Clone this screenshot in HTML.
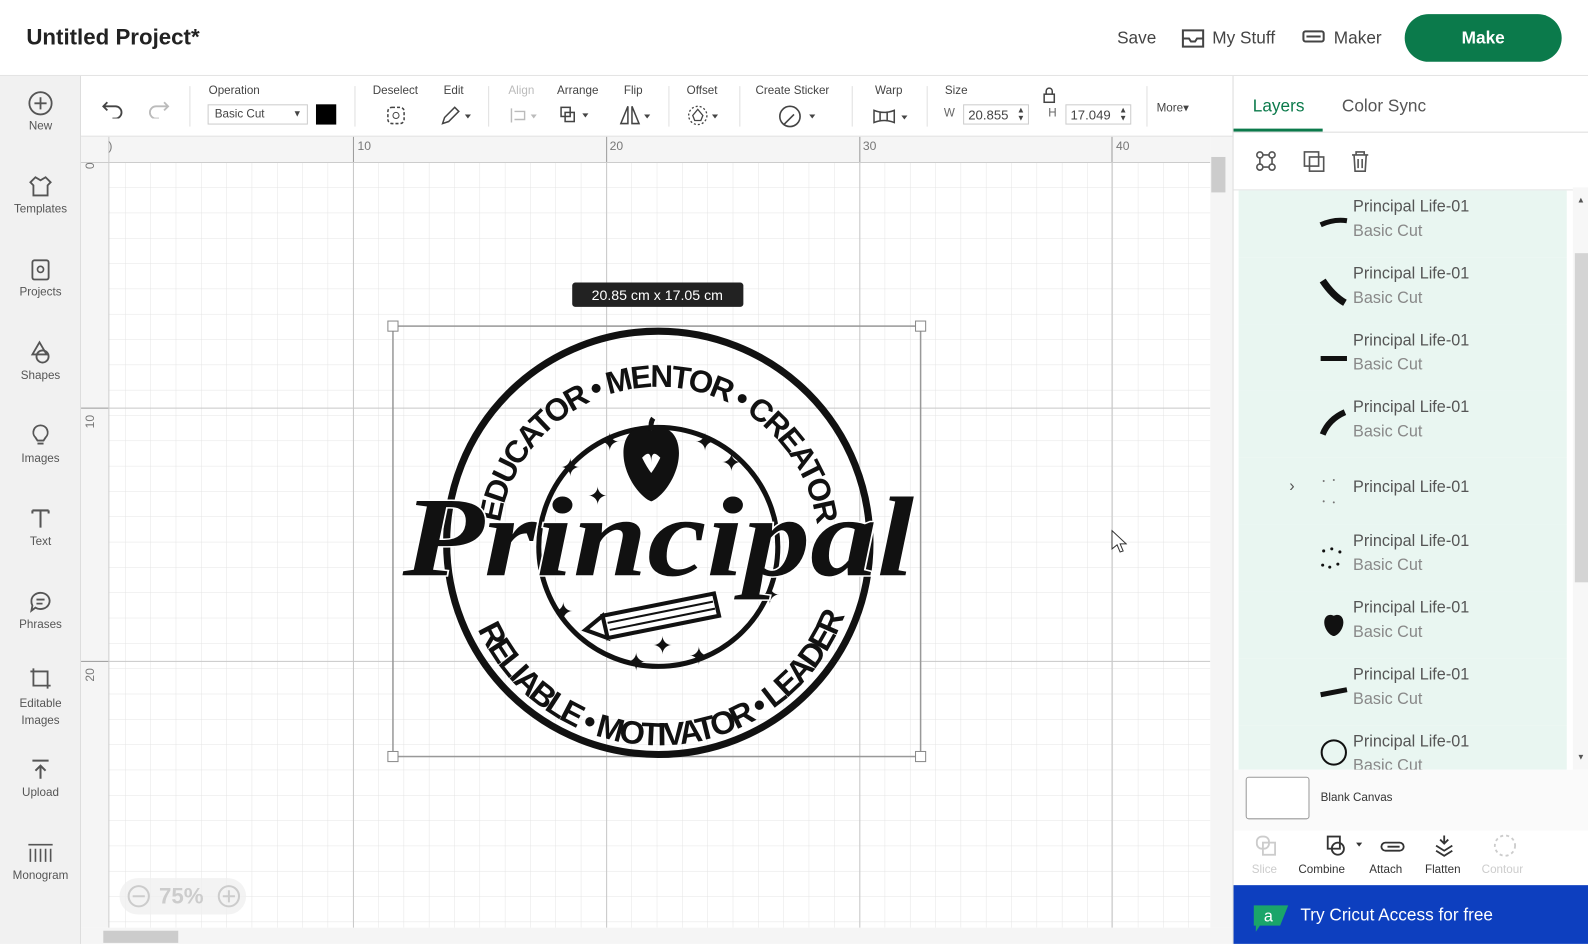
<!DOCTYPE html>
<html><head><meta charset="utf-8"><style>
*{box-sizing:border-box;margin:0;padding:0}
html,body{width:1588px;height:944px;overflow:hidden}
body{font-family:"Liberation Sans",sans-serif;background:#fff;color:#333}
#w{position:absolute;left:0;top:0;width:1568px;height:932px;transform:scale(1.01276);transform-origin:0 0;overflow:hidden}
.abs{position:absolute}
.hdr{left:0;top:0;width:1568px;height:75px;background:#fff;border-bottom:1px solid #e2e2e2}
.side{left:0;top:75px;width:80px;height:869px;background:#f1f1f1;border-right:1px solid #ddd}
.si{position:absolute;left:0;width:80px;text-align:center;font-size:11.5px;color:#555}
.si svg{display:block;margin:0 auto 4px}
.tb{left:80px;top:75px;width:1137px;height:60px;background:#fff;border-bottom:1px solid #ddd}
.lbl{position:absolute;font-size:11.5px;color:#444;top:9px}
.sep{position:absolute;top:10px;width:1px;height:40px;background:#e0e0e0}
.panel{left:1217px;top:75px;width:371px;height:869px;background:#fff;border-left:1px solid #ddd}
.row{position:absolute;left:5px;width:324px;height:66px;background:#e9f6f1}
.row .t1{position:absolute;left:113px;top:8px;font-size:16px;color:#555}
.row .t2{position:absolute;left:113px;top:32px;font-size:16px;color:#888}
</style></head><body><div id="w">
<div class="abs hdr">
 <div class="abs" style="left:26px;top:24px;font-size:22px;color:#222;font-weight:bold">Untitled Project*</div>
 <div class="abs" style="left:1103px;top:28px;font-size:17px;color:#444">Save</div>
 <svg class="abs" style="left:1166px;top:26px" width="24" height="22" viewBox="0 0 24 22"><path d="M2 4h20v16H2z M2 12h6l2 3h4l2-3h6" fill="none" stroke="#444" stroke-width="2"/></svg>
 <div class="abs" style="left:1197px;top:28px;font-size:17px;color:#444">My Stuff</div>
 <svg class="abs" style="left:1285px;top:28px" width="24" height="18" viewBox="0 0 24 18"><rect x="2" y="3" width="20" height="10" rx="2" fill="none" stroke="#444" stroke-width="2"/><path d="M5 8h14" stroke="#444" stroke-width="2"/></svg>
 <div class="abs" style="left:1317px;top:28px;font-size:17px;color:#444">Maker</div>
 <div class="abs" style="left:1387px;top:14px;width:155px;height:47px;border-radius:24px;background:#0b7a4b;color:#fff;font-size:17px;font-weight:bold;text-align:center;line-height:47px">Make</div>
</div>
<div class="abs side">
 <div class="si" style="top:14px"><svg width="26" height="26"><circle cx="13" cy="13" r="11" fill="none" stroke="#555" stroke-width="1.8"/><path d="M13 7v12M7 13h12" stroke="#555" stroke-width="1.8"/></svg>New</div>
 <div class="si" style="top:96px"><svg width="26" height="26"><path d="M8 4l5 3 5-3 5 5-3 3v10H6V12L3 9z" fill="none" stroke="#555" stroke-width="1.8"/></svg>Templates</div>
 <div class="si" style="top:178px"><svg width="26" height="26"><rect x="5" y="4" width="16" height="19" rx="2" fill="none" stroke="#555" stroke-width="1.8"/><circle cx="13" cy="13" r="3" fill="none" stroke="#555" stroke-width="1.6"/></svg>Projects</div>
 <div class="si" style="top:260px"><svg width="26" height="26"><path d="M12 3l7 12H5z" fill="none" stroke="#555" stroke-width="1.8"/><circle cx="15" cy="17" r="6" fill="none" stroke="#555" stroke-width="1.8"/></svg>Shapes</div>
 <div class="si" style="top:342px"><svg width="26" height="26"><path d="M13 3a7 7 0 0 1 5 12l-2 3h-6l-2-3a7 7 0 0 1 5-12zM10 21h6" fill="none" stroke="#555" stroke-width="1.8"/></svg>Images</div>
 <div class="si" style="top:424px"><svg width="26" height="26"><path d="M5 5h16M13 5v17M5 5v3M21 5v3" fill="none" stroke="#555" stroke-width="2"/></svg>Text</div>
 <div class="si" style="top:506px"><svg width="26" height="26"><path d="M4 12a9 8 0 1 1 4 7l-4 3 1-5a9 9 0 0 1-1-5z M9 11h8M9 15h6" fill="none" stroke="#555" stroke-width="1.8"/></svg>Phrases</div>
 <div class="si" style="top:582px;line-height:17px"><svg width="26" height="26"><path d="M6 6h14v14H6zM3 6h6M6 3v6M17 20h6M20 17v6" fill="none" stroke="#555" stroke-width="1.8"/></svg>Editable<br>Images</div>
 <div class="si" style="top:672px"><svg width="26" height="26"><path d="M5 4h16M13 22V9M8 14l5-5 5 5" fill="none" stroke="#555" stroke-width="2"/></svg>Upload</div>
 <div class="si" style="top:754px"><svg width="30" height="26"><path d="M3 5h24M5 9v13M10 9v13M15 9v13M20 9v13M25 9v13" fill="none" stroke="#555" stroke-width="1.6"/></svg>Monogram</div>
</div>
<div class="abs tb">
 <svg class="abs" style="left:20px;top:22px" width="24" height="20"><path d="M6 4L2 8l4 4M2 8h12a6 6 0 0 1 0 12h-3" fill="none" stroke="#444" stroke-width="1.8"/></svg>
 <svg class="abs" style="left:64px;top:22px" width="24" height="20"><path d="M18 4l4 4-4 4M22 8H10a6 6 0 0 0 0 12h3" fill="none" stroke="#bbb" stroke-width="1.8"/></svg>
 <div class="sep" style="left:107px"></div>
 <div class="lbl" style="left:126px">Operation</div>
 <div class="abs" style="left:125px;top:28px;width:99px;height:20px;border:1px solid #ccc;font-size:11.5px;color:#444;padding:3px 6px">Basic Cut<span style="position:absolute;right:5px;font-size:9px">▼</span></div>
 <div class="abs" style="left:232px;top:28px;width:20px;height:20px;background:#000"></div>
 <div class="sep" style="left:270px"></div>
 <div class="lbl" style="left:288px">Deselect</div>
 <svg class="abs" style="left:300px;top:28px" width="22" height="22"><rect x="3" y="3" width="16" height="16" rx="4" fill="none" stroke="#444" stroke-width="1.5" stroke-dasharray="3 2"/><circle cx="11" cy="11" r="3" fill="none" stroke="#444"/></svg>
 <div class="lbl" style="left:358px">Edit</div>
 <svg class="abs" style="left:354px;top:28px" width="34" height="22"><path d="M3 19l2-6 10-10 4 4-10 10z" fill="none" stroke="#444" stroke-width="1.5"/><path d="M25 10l3 4 3-4z" fill="#444"/></svg>
 <div class="sep" style="left:402px"></div>
 <div class="lbl" style="left:422px;color:#bbb">Align</div>
 <svg class="abs" style="left:423px;top:30px" width="30" height="18"><path d="M2 2v14M5 5h10v8H5" fill="none" stroke="#bbb" stroke-width="1.4"/><path d="M21 8l3 4 3-4z" fill="#bbb"/></svg>
 <div class="lbl" style="left:470px">Arrange</div>
 <svg class="abs" style="left:472px;top:29px" width="32" height="20"><rect x="2" y="2" width="9" height="9" fill="none" stroke="#444" stroke-width="1.5"/><rect x="6" y="7" width="9" height="9" fill="none" stroke="#444" stroke-width="1.5"/><path d="M23 8l3 4 3-4z" fill="#444"/></svg>
 <div class="lbl" style="left:536px">Flip</div>
 <svg class="abs" style="left:531px;top:28px" width="34" height="22"><path d="M9 2L2 19h7zM13 2l7 17h-7z" fill="none" stroke="#444" stroke-width="1.5"/><path d="M25 10l3 4 3-4z" fill="#444"/></svg>
 <div class="sep" style="left:580px"></div>
 <div class="lbl" style="left:598px">Offset</div>
 <svg class="abs" style="left:598px;top:28px" width="34" height="22"><circle cx="11" cy="11" r="9" fill="none" stroke="#444" stroke-width="1.3" stroke-dasharray="2 2"/><path d="M11 5l5 6-2 5H8l-2-5z" fill="none" stroke="#444" stroke-width="1.3"/><path d="M25 10l3 4 3-4z" fill="#444"/></svg>
 <div class="sep" style="left:650px"></div>
 <div class="lbl" style="left:666px">Create Sticker</div>
 <svg class="abs" style="left:688px;top:28px" width="40" height="24"><circle cx="12" cy="12" r="10" fill="none" stroke="#444" stroke-width="1.6"/><path d="M6 20l10-10" stroke="#444" stroke-width="1.6"/><path d="M31 10l3 4 3-4z" fill="#444"/></svg>
 <div class="sep" style="left:761px"></div>
 <div class="lbl" style="left:784px">Warp</div>
 <svg class="abs" style="left:780px;top:30px" width="40" height="20"><path d="M3 4q10 4 20 0v12q-10-4-20 0z M9 5v10M16 5v10" fill="none" stroke="#444" stroke-width="1.5"/><path d="M30 9l3 4 3-4z" fill="#444"/></svg>
 <div class="sep" style="left:835px"></div>
 <div class="lbl" style="left:853px">Size</div>
 <svg class="abs" style="left:949px;top:11px" width="14" height="16"><rect x="2" y="7" width="10" height="8" fill="none" stroke="#444" stroke-width="1.5"/><path d="M4 7V4a3 3 0 0 1 6 0v3" fill="none" stroke="#444" stroke-width="1.5"/></svg>
 <div class="abs" style="left:852px;top:31px;font-size:11.5px;color:#666">W</div>
 <div class="abs" style="left:871px;top:28px;width:65px;height:20px;border:1px solid #ccc;font-size:13px;color:#444;padding:2px 4px">20.855<span style="position:absolute;right:3px;top:1px;font-size:8px;line-height:8px">▲<br>▼</span></div>
 <div class="abs" style="left:955px;top:31px;font-size:11.5px;color:#666">H</div>
 <div class="abs" style="left:972px;top:28px;width:65px;height:20px;border:1px solid #ccc;font-size:13px;color:#444;padding:2px 4px">17.049<span style="position:absolute;right:3px;top:1px;font-size:8px;line-height:8px">▲<br>▼</span></div>
 <div class="sep" style="left:1052px"></div>
 <div class="abs" style="left:1062px;top:24px;font-size:11.5px;color:#444">More▾</div>
</div>
<svg class="abs" style="left:80px;top:135px" width="1137" height="809">
 <defs>
  <pattern id="mi" x="-6" y="0" width="25" height="25" patternUnits="userSpaceOnUse"><path d="M25 0V25M0 0H25" stroke="#e4e4e4" stroke-width="1" fill="none"/></pattern>
 </defs>
 <rect width="1137" height="809" fill="#fff"/>
 <rect x="27" y="25" width="1088" height="756" fill="url(#mi)"/>
 <g stroke="#c8c8c8" stroke-width="1">
  <path d="M269 25V781M519 25V781M769 25V781M1018 25V781M27 268H1115M27 518H1115"/>
 </g>
 <rect x="0" y="0" width="1115" height="25" fill="#f5f5f5"/>
 <rect x="0" y="0" width="27" height="781" fill="#f5f5f5"/>
 <path d="M0 25.5H1115M27.5 0V781" stroke="#ccc"/>
 <g stroke="#999"><path d="M269 0V25M519 0V25M769 0V25M1018 0V25M0 268H27M0 518H27"/></g>
 <g font-size="12" fill="#777"><text x="27" y="13">)</text><text x="273" y="13">10</text><text x="522" y="13">20</text><text x="772" y="13">30</text><text x="1022" y="13">40</text>
 <text transform="translate(13,288) rotate(-90)">10</text><text transform="translate(13,538) rotate(-90)">20</text><text transform="translate(13,32) rotate(-90)">0</text></g>
 <rect x="1115" y="0" width="22" height="781" fill="#f5f5f5"/>
 <rect x="1116" y="20" width="14" height="35" fill="#ccc"/>
 <rect x="0" y="781" width="1137" height="28" fill="#f5f5f5"/>
 <rect x="22" y="784" width="74" height="12" fill="#ccc"/>
 <rect x="38" y="732" width="125" height="36" rx="18" fill="#f0f0f0" opacity=".8"/>
 <text x="77" y="757" font-size="22" fill="#ccc" font-weight="bold">75%</text>
 <circle cx="57" cy="750" r="10" fill="none" stroke="#ccc" stroke-width="2"/><path d="M51 750h12" stroke="#ccc" stroke-width="2"/>
 <circle cx="146" cy="750" r="10" fill="none" stroke="#ccc" stroke-width="2"/><path d="M140 750h12M146 744v12" stroke="#ccc" stroke-width="2"/>
</svg>
<svg class="abs" style="left:380px;top:275px" width="540" height="490" viewBox="380 275 540 490">
 <rect x="565" y="279" width="169" height="24" rx="3" fill="#222"/>
 <text x="649" y="296" text-anchor="middle" font-size="14" fill="#fff">20.85  cm x 17.05  cm</text>
 <rect x="388" y="322" width="521" height="425" fill="none" stroke="#999" stroke-width="1.5"/>
 <g fill="#fff" stroke="#888"><rect x="383" y="317" width="10" height="10"/><rect x="904" y="317" width="10" height="10"/><rect x="383" y="742" width="10" height="10"/><rect x="904" y="742" width="10" height="10"/></g>
 <circle cx="650" cy="536" r="209" fill="none" stroke="#111" stroke-width="7"/>
 <circle cx="650" cy="540" r="118" fill="none" stroke="#111" stroke-width="5"/>
 <defs><path id="tp" d="M650 698a158 158 0 1 1 0.1 0"/><path id="bp" d="M454 540a196 196 0 0 0 392 0"/></defs>
 <text font-size="31" font-weight="bold" fill="#111" letter-spacing="-2.4" text-anchor="middle"><textPath href="#tp" startOffset="50%">EDUCATOR • MENTOR • CREATOR</textPath></text>
 <text font-size="32" font-weight="bold" fill="#111" letter-spacing="-2.6" text-anchor="middle"><textPath href="#bp" startOffset="51%">RELIABLE • MOTIVATOR • LEADER</textPath></text>
 <path d="M643 425c-18-9-32 8-26 34 5 20 19 34 26 36 7-2 21-16 26-36 6-26-8-43-26-34z" fill="#111"/>
 <path d="M643 425q-1-8 2-12" stroke="#111" stroke-width="5" fill="none"/>
 <path d="M634 452q9-10 9 5q0-15 9-5q-5 10-9 15q-4-5-9-15z" fill="#fff"/>
 <g fill="#111" font-size="24"><text x="592" y="445">✦</text><text x="686" y="445">✦</text><text x="553" y="470">✦</text><text x="712" y="465">✦</text><text x="580" y="498">✦</text><text x="546" y="612">✦</text><text x="750" y="596">✦</text><text x="644" y="646">✦</text><text x="618" y="662">✦</text><text x="680" y="656">✦</text></g>
 <path d="M595 608l110-22 5 22-110 22zM578 622l17-14 5 22z" fill="#fff" stroke="#111" stroke-width="4"/>
 <path d="M600 615l104-21M602 622l104-21" stroke="#111" stroke-width="2"/>
 <text x="650" y="568" text-anchor="middle" font-size="112" font-style="italic" font-weight="bold" fill="#111" font-family="Liberation Serif, serif" stroke="#fff" stroke-width="3" paint-order="stroke" textLength="505" lengthAdjust="spacingAndGlyphs">Principal</text>
</svg>
<svg class="abs" style="left:1097px;top:523px" width="16" height="24"><path d="M1 1v18l5-4 3 7 3-1-3-7h6z" fill="#fff" stroke="#333"/></svg>
<div class="abs panel">
 <div class="abs" style="left:19px;top:20px;font-size:17px;color:#0b7a4b">Layers</div>
 <div class="abs" style="left:0;top:52px;width:88px;height:3px;background:#0b7a4b"></div>
 <div class="abs" style="left:107px;top:20px;font-size:17px;color:#555">Color Sync</div>
 <div class="abs" style="left:0;top:55px;width:371px;height:1px;background:#ddd"></div>
 <svg class="abs" style="left:20px;top:72px" width="130" height="26"><g fill="none" stroke="#555" stroke-width="1.6"><circle cx="6" cy="6" r="3"/><circle cx="18" cy="6" r="3"/><circle cx="6" cy="18" r="3"/><circle cx="18" cy="18" r="3"/><path d="M9 6h6M6 9v6M18 9v6M9 18h6"/><rect x="50" y="3" width="14" height="14"/><rect x="55" y="8" width="14" height="14"/><path d="M97 6h16M101 6V3h8v3M99 6l1 16h10l1-16M103 10v9M107 10v9"/></g></svg>
 <div class="abs" style="left:0;top:112px;width:371px;height:1px;background:#e4e4e4"></div>
 <div class="row" style="top:113px"><svg class="abs" style="left:78px;top:18px" width="32" height="30"><path d="M3 16q13-6 26-4" stroke="#111" stroke-width="5" fill="none"/></svg><div class="t1">Principal Life-01</div><div class="t2">Basic Cut</div></div>
 <div class="row" style="top:179px"><svg class="abs" style="left:78px;top:18px" width="32" height="30"><path d="M5 5q10 15 22 22" stroke="#111" stroke-width="7" fill="none"/></svg><div class="t1">Principal Life-01</div><div class="t2">Basic Cut</div></div>
 <div class="row" style="top:245px"><svg class="abs" style="left:78px;top:18px" width="32" height="30"><path d="M3 16h26" stroke="#111" stroke-width="5" fill="none"/></svg><div class="t1">Principal Life-01</div><div class="t2">Basic Cut</div></div>
 <div class="row" style="top:311px"><svg class="abs" style="left:78px;top:18px" width="32" height="30"><path d="M5 25q6-15 22-22" stroke="#111" stroke-width="6" fill="none"/></svg><div class="t1">Principal Life-01</div><div class="t2">Basic Cut</div></div>
 <div class="row" style="top:377px"><div class="abs" style="left:50px;top:20px;font-size:16px;color:#555">›</div><svg class="abs" style="left:78px;top:18px" width="32" height="30"><g fill="#777"><circle cx="6" cy="5" r="1"/><circle cx="16" cy="4" r="1"/><circle cx="6" cy="25" r="1"/><circle cx="16" cy="26" r="1"/></g></svg><div class="t1" style="top:21px">Principal Life-01</div></div>
 <div class="row" style="top:443px"><svg class="abs" style="left:78px;top:18px" width="32" height="30"><g fill="#111"><circle cx="6" cy="8" r="1.5"/><circle cx="14" cy="6" r="1.5"/><circle cx="22" cy="9" r="1.5"/><circle cx="5" cy="22" r="1.5"/><circle cx="12" cy="24" r="1.5"/><circle cx="20" cy="21" r="1.5"/></g></svg><div class="t1">Principal Life-01</div><div class="t2">Basic Cut</div></div>
 <div class="row" style="top:509px"><svg class="abs" style="left:78px;top:18px" width="32" height="30"><path d="M16 6c-6-3-11 2-9 10 2 7 7 10 9 10 2 0 7-3 9-10 2-8-3-13-9-10z" fill="#111"/></svg><div class="t1">Principal Life-01</div><div class="t2">Basic Cut</div></div>
 <div class="row" style="top:575px"><svg class="abs" style="left:78px;top:18px" width="32" height="30"><path d="M3 18l26-5" stroke="#111" stroke-width="5" fill="none"/></svg><div class="t1">Principal Life-01</div><div class="t2">Basic Cut</div></div>
 <div class="row" style="top:641px;height:44px;overflow:hidden"><svg class="abs" style="left:78px;top:10px" width="32" height="34"><circle cx="16" cy="17" r="12" fill="none" stroke="#111" stroke-width="2"/></svg><div class="t1">Principal Life-01</div><div class="t2">Basic Cut</div></div>
 <div class="abs" style="left:335px;top:110px;width:18px;height:575px;background:#f7f7f7"></div>
 <div class="abs" style="left:337px;top:175px;width:14px;height:325px;background:#d4d4d4"></div>
 <div class="abs" style="left:339px;top:118px;font-size:8px;color:#555">▲</div>
 <div class="abs" style="left:339px;top:668px;font-size:8px;color:#555">▼</div>
 <div class="abs" style="left:0;top:685px;width:371px;height:60px;background:#fafafa"></div>
 <div class="abs" style="left:12px;top:692px;width:63px;height:42px;border:1px solid #999;border-radius:3px;background:#fff"></div>
 <div class="abs" style="left:86px;top:707px;font-size:11.5px;color:#333">Blank Canvas</div>
 <svg class="abs" style="left:20px;top:748px" width="280" height="28"><g fill="none" stroke-width="1.8"><g stroke="#ccc"><rect x="3" y="3" width="12" height="12" rx="5"/><rect x="9" y="9" width="12" height="12"/></g><g stroke="#333"><rect x="73" y="3" width="12" height="12"/><circle cx="83" cy="15" r="6"/><path d="M130 9h14a4 4 0 0 1 0 8h-14a4 4 0 0 1 0-8zM132 13h12"/><path d="M188 2v8M184 6l4 4 4-4M180 12l8 5 8-5M180 17l8 5 8-5"/></g><circle cx="248" cy="12" r="10" stroke="#ccc" stroke-dasharray="3 3"/></g><path d="M101 9l3 4 3-4z" fill="#333"/></svg>
 <div class="abs" style="left:18px;top:778px;font-size:11.5px;color:#ccc">Slice</div>
 <div class="abs" style="left:64px;top:778px;font-size:11.5px;color:#333">Combine</div>
 <div class="abs" style="left:134px;top:778px;font-size:11.5px;color:#333">Attach</div>
 <div class="abs" style="left:189px;top:778px;font-size:11.5px;color:#333">Flatten</div>
 <div class="abs" style="left:245px;top:778px;font-size:11.5px;color:#ccc">Contour</div>
 <div class="abs" style="left:0;top:799px;width:371px;height:70px;background:#0d3fbf"></div>
 <svg class="abs" style="left:18px;top:816px" width="40" height="32"><path d="M2 3h34l-8 20H8l-4 6V23H2z" fill="#1aa56a"/><text x="12" y="19" font-size="16" fill="#fff">a</text></svg>
 <div class="abs" style="left:66px;top:819px;font-size:17px;color:#fff">Try Cricut Access for free</div>
</div>
</div></body></html>
